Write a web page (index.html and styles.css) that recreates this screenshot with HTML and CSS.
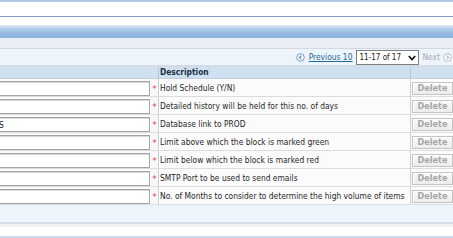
FILE: index.html
```html
<!DOCTYPE html>
<html lang="en">
<head>
<meta charset="UTF-8"/>
<title>Profile Options</title>
<link rel="stylesheet" href="styles.css">
</head>
<body>
<div class="page">
  <div class="top-rule"></div>
  <div class="top-space"></div>
  <div class="gap-space"></div>
  <div class="region-header"></div>
  <div class="sub-bar"></div>

  <!-- pagination -->
  <div class="nav-bar">
    <svg class="nav-icon" width="9" height="9" viewBox="0 0 9 9"><circle cx="4.5" cy="4.5" r="3.8" fill="#fff" stroke="#6d9bd4" stroke-width="1"/><polyline points="5.3,2.6 3.3,4.5 5.3,6.4" fill="none" stroke="#4f86c9" stroke-width="1.1"/></svg>
    <a class="prev-link" href="#">Previous 10</a>
    <div class="range-select">
      <span>11-17 of 17</span>
      <svg width="8" height="6" viewBox="0 0 8 6"><polyline points="0.8,1 4,4.5 7.2,1" fill="none" stroke="#111" stroke-width="1.7"/></svg>
    </div>
    <span class="next-label">Next</span>
    <svg class="nav-icon" width="9" height="9" viewBox="0 0 9 9"><circle cx="4.5" cy="4.5" r="3.8" fill="#fff" stroke="#b9bec6" stroke-width="1"/><polyline points="3.7,2.6 5.7,4.5 3.7,6.4" fill="none" stroke="#a8aeb8" stroke-width="1.1"/></svg>
  </div>

  <div class="grid">
    <div class="hcell"></div>
    <div class="hcell star-h"></div>
    <div class="hcell desc-h">Description</div>
    <div class="hcell del-h"></div>

    <div class="vcell"><div class="val-box"></div></div>
    <div class="scell">*</div>
    <div class="dcell">Hold Schedule (Y/N)</div>
    <div class="bcell"><button class="del-btn" disabled>Delete</button></div>

    <div class="vcell"><div class="val-box"></div></div>
    <div class="scell">*</div>
    <div class="dcell">Detailed history will be held for this no. of days</div>
    <div class="bcell"><button class="del-btn" disabled>Delete</button></div>

    <div class="vcell"><div class="val-box"><span class="val-text">S</span></div></div>
    <div class="scell">*</div>
    <div class="dcell">Database link to PROD</div>
    <div class="bcell"><button class="del-btn" disabled>Delete</button></div>

    <div class="vcell"><div class="val-box"></div></div>
    <div class="scell">*</div>
    <div class="dcell">Limit above which the block is marked green</div>
    <div class="bcell"><button class="del-btn" disabled>Delete</button></div>

    <div class="vcell"><div class="val-box"></div></div>
    <div class="scell">*</div>
    <div class="dcell">Limit below which the block is marked red</div>
    <div class="bcell"><button class="del-btn" disabled>Delete</button></div>

    <div class="vcell"><div class="val-box"></div></div>
    <div class="scell">*</div>
    <div class="dcell">SMTP Port to be used to send emails</div>
    <div class="bcell"><button class="del-btn" disabled>Delete</button></div>

    <div class="vcell"><div class="val-box"></div></div>
    <div class="scell">*</div>
    <div class="dcell">No. of Months to consider to determine the high volume of items</div>
    <div class="bcell"><button class="del-btn" disabled>Delete</button></div>
  </div>

  <div class="foot-band"></div>
  <div class="foot-space"></div>
  <div class="foot-rule"></div>
</div>
</body>
</html>
```

FILE: styles.css
```css
/* base */
body,html {
  margin:0; padding:0; background:#fff; overflow:hidden;
  font-family:"DejaVu Sans Condensed", "Liberation Sans", sans-serif; font-size:8.4px; color:#222;
}
.page {width:453px;}

/* top chrome */
.top-rule {height:2px; background:#aec8e3;}
.top-space {height:14px; border-bottom:1px solid #7f9dc4;}
.gap-space {height:8px;}
.region-header {
  height:11px; border-top:2px solid #d6e1ee;
  background:linear-gradient(#c0d5ec,#94b9df 60%,#8fb4dc);
}
.sub-bar {height:10px; background:#e9edf5; border-bottom:1px solid #d2d8e1;}

/* pagination */
.nav-bar {
  height:16px; background:#eef4fc; border-bottom:2px solid #d4dbe4;
  display:flex; align-items:center; justify-content:flex-end; padding-right:1px;
}
.nav-icon {display:block; flex:none;}
.prev-link {color:#246a99; text-decoration:underline; margin:0 4px 0 4px; white-space:nowrap;}
.range-select {
  width:57px; height:13px; background:#fff; border:1px solid #7e7e7e;
  display:flex; align-items:center; justify-content:space-between; padding:0 2px 0 2px;
  margin-top:1px; color:#1a1a1a; white-space:nowrap; font-size:8px;
}
.range-select svg {flex:none;}
.next-label {color:#a3abb6; margin:0 3px 0 3px;}

/* table */
.grid {display:grid; grid-template-columns:151px 7px 252px 43px;}
.hcell {height:11px; background:#cfe0f1; border-bottom:1px solid #c4d3e3;}
.star-h {background:#d3e1ef;}
.desc-h {border-left:1px solid #b7c9dc; padding-left:1px; font-weight:bold; color:#1b2f45; line-height:11px;}
.del-h {border-left:1px solid #b7c9dc;}

.vcell, .scell, .dcell, .bcell {height:17px; border-bottom:1px solid #dcdcdc; background:#fbfbfb;}
.vcell {display:flex; align-items:flex-start;}
.val-box {
  box-sizing:border-box; width:154px; height:15px; margin:2px 0 0 -4px; background:#fff;
  border:1px solid #a4a4a4; box-shadow:inset 1px 1px 0 #d9d9d9; display:flex; align-items:center;
}
.val-text {margin-left:2px; color:#222;}
.scell {color:#e0393e; text-align:center; line-height:21px; font-size:9px; background:#f7f7f7;}
.dcell {border-left:1px solid #d0d0d0; padding-left:1px; line-height:19px; white-space:nowrap; overflow:hidden; color:#262626;}
.bcell {border-left:1px solid #cfcfcf; display:flex; align-items:flex-start; justify-content:flex-end; background:#fbfbfb;}
.del-btn {
  width:41px; height:13px; margin:3px 0 0 0; padding:0; box-sizing:border-box;
  border:1px solid #c4c4c4; background:linear-gradient(#fafafa,#ececec); box-shadow:inset 1px 1px 0 #fff;
  font-family:inherit; font-size:9px; font-weight:bold; color:#a6a6a6; line-height:11px;
}

/* footer */
.foot-band {height:17px; background:#eef4fc; border-bottom:2px solid #d5dbe4;}
.foot-space {height:12px; background:linear-gradient(#f1f2f4 0,#f1f2f4 3px,#fff 3px);}
.foot-rule {height:2px; background:#c8daec;}
```
